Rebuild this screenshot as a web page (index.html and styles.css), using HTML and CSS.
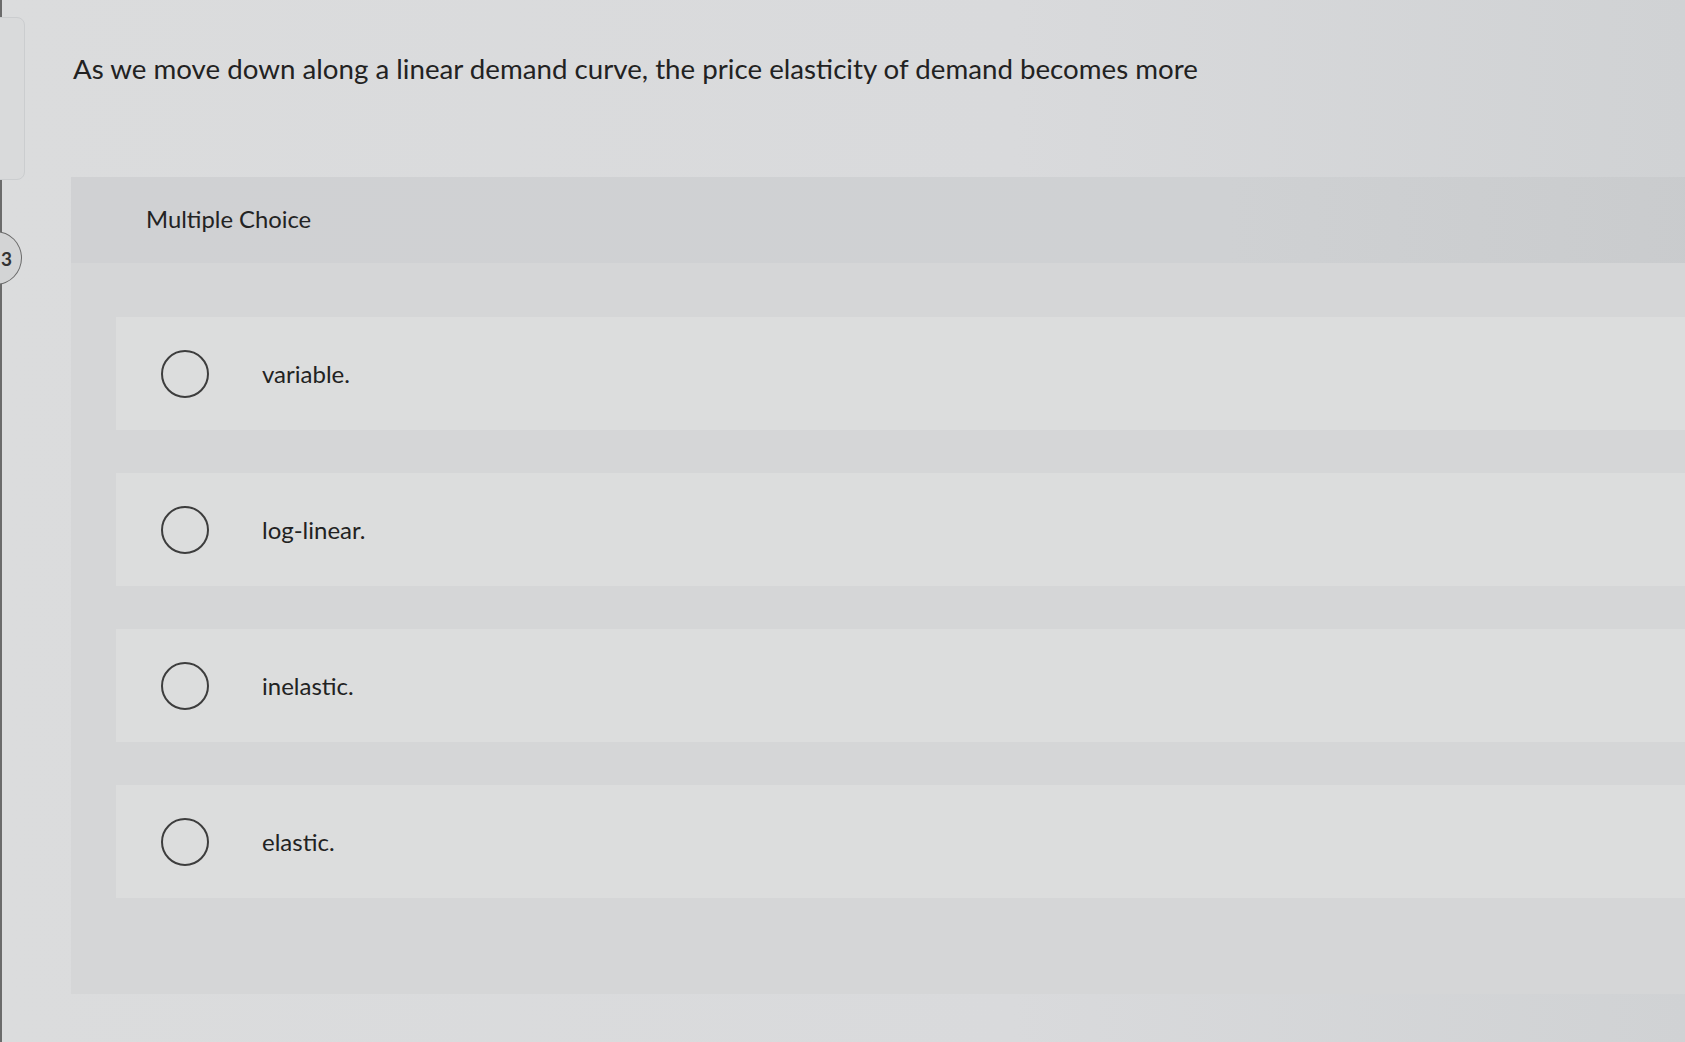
FILE: index.html
```html
<!DOCTYPE html>
<html lang="en">
<head>
<meta charset="utf-8">
<title>Multiple Choice</title>
<link rel="stylesheet" href="styles.css">
</head>
<body>
<div class="bezel"></div>
<div class="side-card"></div>
<div class="side-badge"><span>3</span></div>
<main class="page">
  <p class="question">As we move down along a linear demand curve, the price elasticity of demand becomes more</p>
  <section class="panel">
    <div class="panel-head">Multiple Choice</div>
    <div class="panel-body">
      <label class="option"><span class="radio"></span><span class="opt-text">variable.</span></label>
      <label class="option"><span class="radio"></span><span class="opt-text">log-linear.</span></label>
      <label class="option"><span class="radio"></span><span class="opt-text">inelastic.</span></label>
      <label class="option"><span class="radio"></span><span class="opt-text">elastic.</span></label>
    </div>
  </section>
</main>
</body>
</html>
```
FILE: styles.css
```css
html, body {
  margin: 0;
  padding: 0;
  height: 100%;
  overflow: hidden;
}
body {
  background: linear-gradient(90deg, #dbdcdd 0%, #d9dadc 60%, #d0d2d4 100%);
  font-family: "Lato", "Open Sans", sans-serif;
  color: #222;
  position: relative;
}
.bezel {
  position: absolute;
  left: 0;
  top: 0;
  bottom: 0;
  width: 2px;
  background: #6b6b6b;
}
.side-card {
  position: absolute;
  left: -10px;
  top: 17px;
  width: 33px;
  height: 161px;
  border: 1px solid #cbcdcf;
  border-radius: 8px;
  background: #d9dadb;
}
.side-badge {
  position: absolute;
  left: -31px;
  top: 231px;
  width: 53px;
  height: 54px;
  border: 1.5px solid #6a6a6a;
  border-radius: 50%;
  background: #d3d4d5;
  display: flex;
  align-items: center;
  justify-content: flex-end;
  box-sizing: border-box;
  padding-right: 9px;
}
.side-badge span {
  font-weight: 700;
  font-size: 19px;
  color: #333;
}
.page {
  padding: 51px 0 0 73px;
}
.question {
  margin: 0;
  font-size: 27.7px;
  line-height: 36px;
  color: #222;
}
.panel {
  margin-top: 90px;
  margin-right: -40px;
  margin-left: -2px;
  height: 817px;
  background: #d5d6d7;
}
.panel-head {
  height: 86px;
  box-sizing: border-box;
  padding: 25px 0 0 75px;
  background: linear-gradient(90deg, #d0d1d3 0%, #cfd1d3 70%, #c9cbcd 100%);
  font-size: 23.8px;
  line-height: 34px;
  color: #232323;
}
.panel-body {
  padding: 54px 0 0 45px;
  display: flex;
  flex-direction: column;
  gap: 43px;
}
.option {
  height: 113px;
  background: #dcdddd;
  display: flex;
  align-items: center;
  padding-left: 45px;
}
.radio {
  width: 48px;
  height: 48px;
  box-sizing: border-box;
  border: 2px solid #3d3d3d;
  border-radius: 50%;
  flex: none;
}
.opt-text {
  margin-left: 53px;
  font-size: 24px;
  color: #222;
}
```
